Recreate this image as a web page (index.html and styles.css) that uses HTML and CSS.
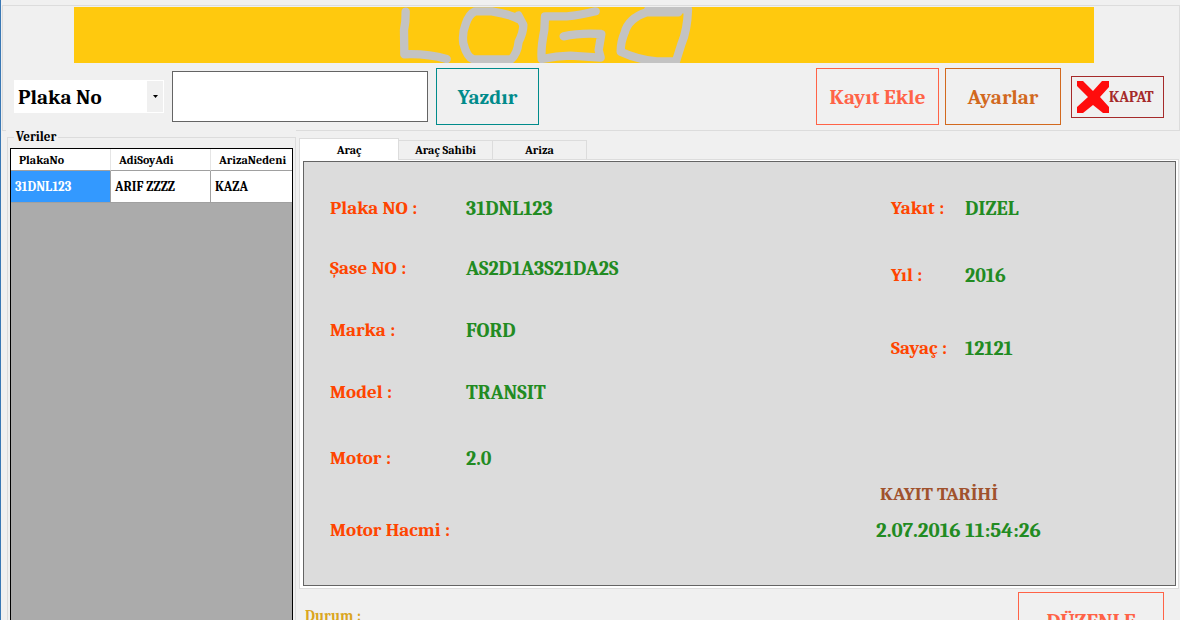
FILE: index.html
```html
<!DOCTYPE html>
<html lang="tr">
<head>
    <meta charset="UTF-8">
    <meta name="viewport" content="width=device-width, initial-scale=1.0">
    <title>Araç Kayıt</title>
    <link rel="stylesheet" href="styles.css">
</head>
<body>
    <header class="top-box">
        <div class="banner">
            <svg class="logo" viewBox="0 21 1020 168" role="img" aria-label="Logo">
                <path d="M77 35 L76 65 L72 90 L73 163 Q140 160 200 177"/>
                <path d="M415 46 L430 75 Q430 98 416 125 Q412 162 393 178 H282 Q262 175 250 130 Q246 100 256 75 Q266 42 285 34 H335 Q390 42 422 60"/>
                <path d="M647 34 Q600 46 560 49 H495 L493 90 Q482 145 485 177 Q530 168 570 167 L662 173 L656 150 L664 102 Q600 98 551 109"/>
                <path d="M895 37 H800 Q745 55 734 98 Q722 125 722 155 Q770 178 830 184 H888 L905 130 Q922 90 924 28 H805"/>
            </svg>
        </div>
        <form class="toolbar">
            <div class="search-type">
                <select id="searchType" aria-label="Arama türü">
                    <option>Plaka No</option>
                    <option>Şase No</option>
                </select>
                <svg class="arrow" viewBox="0 0 5 3" aria-hidden="true"><path d="M0 0h5L2.500 3z"/></svg>
            </div>
            <input type="text" class="search-input" aria-label="Arama">
            <button type="button" class="btn btn-print">Yazdır</button>
            <button type="button" class="btn btn-add">Kayıt Ekle</button>
            <button type="button" class="btn btn-settings">Ayarlar</button>
            <button type="button" class="btn btn-close">
                <svg class="close-icon" viewBox="0 0 32 32" aria-hidden="true"><path d="M0 0H6L16 10L25 0H32V6L23 16L32 26V32H26L16 24L6 32H0V26L11 16L0 5z"/></svg>
                KAPAT
            </button>
        </form>
    </header>

    <main>
        <section class="list">
            <fieldset>
                <legend>Veriler</legend>
                <div class="grid-box">
                    <table>
                        <thead>
                            <tr><th>PlakaNo</th><th>AdiSoyAdi</th><th>ArizaNedeni</th></tr>
                        </thead>
                        <tbody>
                            <tr><td class="selected">31DNL123</td><td>ARIF ZZZZ</td><td>KAZA</td></tr>
                        </tbody>
                    </table>
                </div>
            </fieldset>
        </section>

        <section class="detail">
            <div class="tabs" role="tablist">
                <button type="button" role="tab" class="tab active" aria-selected="true">Araç</button>
                <button type="button" role="tab" class="tab">Araç Sahibi</button>
                <button type="button" role="tab" class="tab">Ariza</button>
            </div>
            <div class="tab-page" role="tabpanel">
                <div class="panel">
                    <dl class="fields">
                        <dt>Plaka NO :</dt><dd>31DNL123</dd>
                        <dt>Şase NO :</dt><dd>AS2D1A3S21DA2S</dd>
                        <dt>Marka :</dt><dd>FORD</dd>
                        <dt>Model :</dt><dd>TRANSIT</dd>
                        <dt>Motor :</dt><dd>2.0</dd>
                        <dt>Motor Hacmi :</dt><dd></dd>
                    </dl>
                    <div class="side">
                        <dl class="fields side-fields">
                            <dt>Yakıt :</dt><dd>DIZEL</dd>
                            <dt>Yıl :</dt><dd>2016</dd>
                            <dt>Sayaç :</dt><dd>12121</dd>
                        </dl>
                        <div class="record-date">
                            <h2>KAYIT TARİHİ</h2>
                            <p>2.07.2016 11:54:26</p>
                        </div>
                    </div>
                </div>
            </div>
            <div class="bottom">
                <span class="status">Durum :</span>
                <button type="button" class="btn btn-edit">DÜZENLE</button>
            </div>
        </section>
    </main>
</body>
</html>
```
FILE: styles.css
```css
:root {
    --bg: #f0f0f0;
    --line: #dcdcdc;
    --dark-line: #646464;
    --label: #ff4500;
    --value: #228b22;
}

* {
    margin: 0;
    padding: 0;
    box-sizing: border-box;
    font-family: Cambria, "Liberation Serif", serif;
    font-weight: bold;
}

body {
    display: flex;
    flex-direction: column;
    height: 100vh;
    padding-top: 5px;
    overflow: hidden;
    background-color: var(--bg);
    border-left: 1px solid #3a78b4;
    font-size: 12px;
}

.top-box {
    flex: none;
    margin-left: 1px;
    padding-top: 1px;
    border: 1px solid var(--line);
}

.banner {
    height: 56px;
    margin: 0 85px 0 71px;
    background-color: #ffc90e;
}

.logo {
    display: block;
    width: 340px;
    height: 56px;
    margin-left: 30%;
    fill: none;
    stroke: #c3c3c3;
    stroke-width: 25;
    stroke-linecap: round;
    stroke-linejoin: round;
}

.toolbar {
    display: flex;
    align-items: center;
    padding: 5px 15px 5px 11px;
}

.search-type {
    position: relative;
    width: 150px;
    margin-right: 8px;
}

.search-type select {
    display: block;
    width: 100%;
    height: 33px;
    padding-left: 3px;
    appearance: none;
    border: 1px solid #fff;
    border-radius: 0;
    background: linear-gradient(to left, var(--bg) 16px, #fff 16px);
    color: #000;
    font-size: 21px;
}

.arrow {
    position: absolute;
    top: 15px;
    right: 6px;
    width: 5px;
    height: 3px;
    pointer-events: none;
}

.search-input {
    width: 256px;
    height: 51px;
    margin-right: 8px;
    padding: 0 8px;
    border: 1px solid var(--dark-line);
    background-color: #fff;
    font-size: 21px;
}

.btn {
    height: 57px;
    border: 1px solid currentColor;
    background-color: transparent;
    font-size: 21px;
}

.btn-print {
    width: 103px;
    color: #008b8b;
}

.btn-add {
    width: 123px;
    margin-left: auto;
    margin-right: 6px;
    color: #ff6347;
}

.btn-settings {
    width: 116px;
    margin-right: 10px;
    color: #d2691e;
}

.btn-close {
    display: flex;
    align-items: center;
    width: 93px;
    height: 42px;
    padding-left: 5px;
    color: #a52a2a;
    font-size: 15px;
}

.close-icon {
    flex: none;
    width: 32px;
    height: 32px;
    fill: #ff0c0c;
}

main {
    display: flex;
    flex: 1;
    min-height: 0;
}

/* covers the bottom line of the box above */
.list {
    display: flex;
    position: relative;
    flex: none;
    width: 290px;
    margin: -1px 0 0 5px;
    padding-left: 1px;
    background-color: var(--bg);
}

fieldset {
    display: flex;
    flex: 1;
    border: 1px solid var(--line);
    border-bottom: none;
    padding: 4px 2px 0;
}

legend {
    margin-left: 4px;
    padding: 0 2px;
    font-size: 13px;
    line-height: 14px;
}

.grid-box {
    flex: 1;
    height: 100%;
    border: 1px solid #000;
    border-bottom: none;
    background-color: #ababab;
}

table {
    width: 100%;
    table-layout: fixed;
    border-collapse: separate;
    border-spacing: 0;
    background-color: #fff;
}

th,
td {
    width: 100px;
    text-align: left;
    border-right: 1px solid #a0a0a0;
    border-bottom: 1px solid #a0a0a0;
}

th:last-child,
td:last-child {
    width: auto;
    border-right: none;
}

th {
    height: 22px;
    padding-left: 8px;
    border-right-color: #e5e5e5;
}

td {
    height: 32px;
    padding-left: 4px;
    font-size: 13px;
}

td.selected {
    background-color: #3399ff;
    color: #fff;
}

.detail {
    display: flex;
    flex: 1;
    flex-direction: column;
    padding: 7px 1px 0 3px;
}

.tabs {
    display: flex;
    align-items: flex-end;
    flex: none;
}

.tab {
    width: 94px;
    height: 19px;
    border: 1px solid var(--line);
    border-width: 1px 1px 0 0;
    background-color: var(--bg);
    color: #000;
    font-size: 12px;
}

.tab.active {
    position: relative;
    width: 100px;
    height: 22px;
    margin-bottom: -1px;
    border-left-width: 1px;
    background-color: #fff;
}

.tab-page {
    flex: none;
    padding: 1px 2px 2px 3px;
    border: 1px solid var(--line);
    background-color: #fff;
}

.panel {
    display: flex;
    justify-content: space-between;
    padding: 16px 0 19px 26px;
    border: 1px solid var(--dark-line);
    background-color: #dcdcdc;
}

.fields {
    display: grid;
    grid-template-columns: 136px auto;
    grid-template-rows: 60px 60px 64px 60px 72px 72px;
    align-items: center;
    font-size: 19px;
}

.fields dt {
    color: var(--label);
}

.fields dd {
    color: var(--value);
    font-size: 20px;
}

.side {
    display: flex;
    flex-direction: column;
    width: 299px;
}

.side-fields {
    grid-template-columns: 74px auto;
    grid-template-rows: 60px 74px 72px;
    padding-left: 15px;
}

.record-date {
    margin-top: auto;
    padding-bottom: 18px;
    line-height: 36px;
}

.record-date h2 {
    padding-left: 4px;
    color: #a0522d;
    font-size: 19px;
}

.record-date p {
    color: var(--value);
    font-size: 21px;
}

.bottom {
    display: flex;
    align-items: flex-start;
    justify-content: space-between;
    flex: none;
    padding: 3px 15px 0 6px;
}

.status {
    color: #daa520;
    font-size: 15px;
    line-height: 48px;
}

.btn-edit {
    width: 146px;
    color: #ff6347;
}
```
